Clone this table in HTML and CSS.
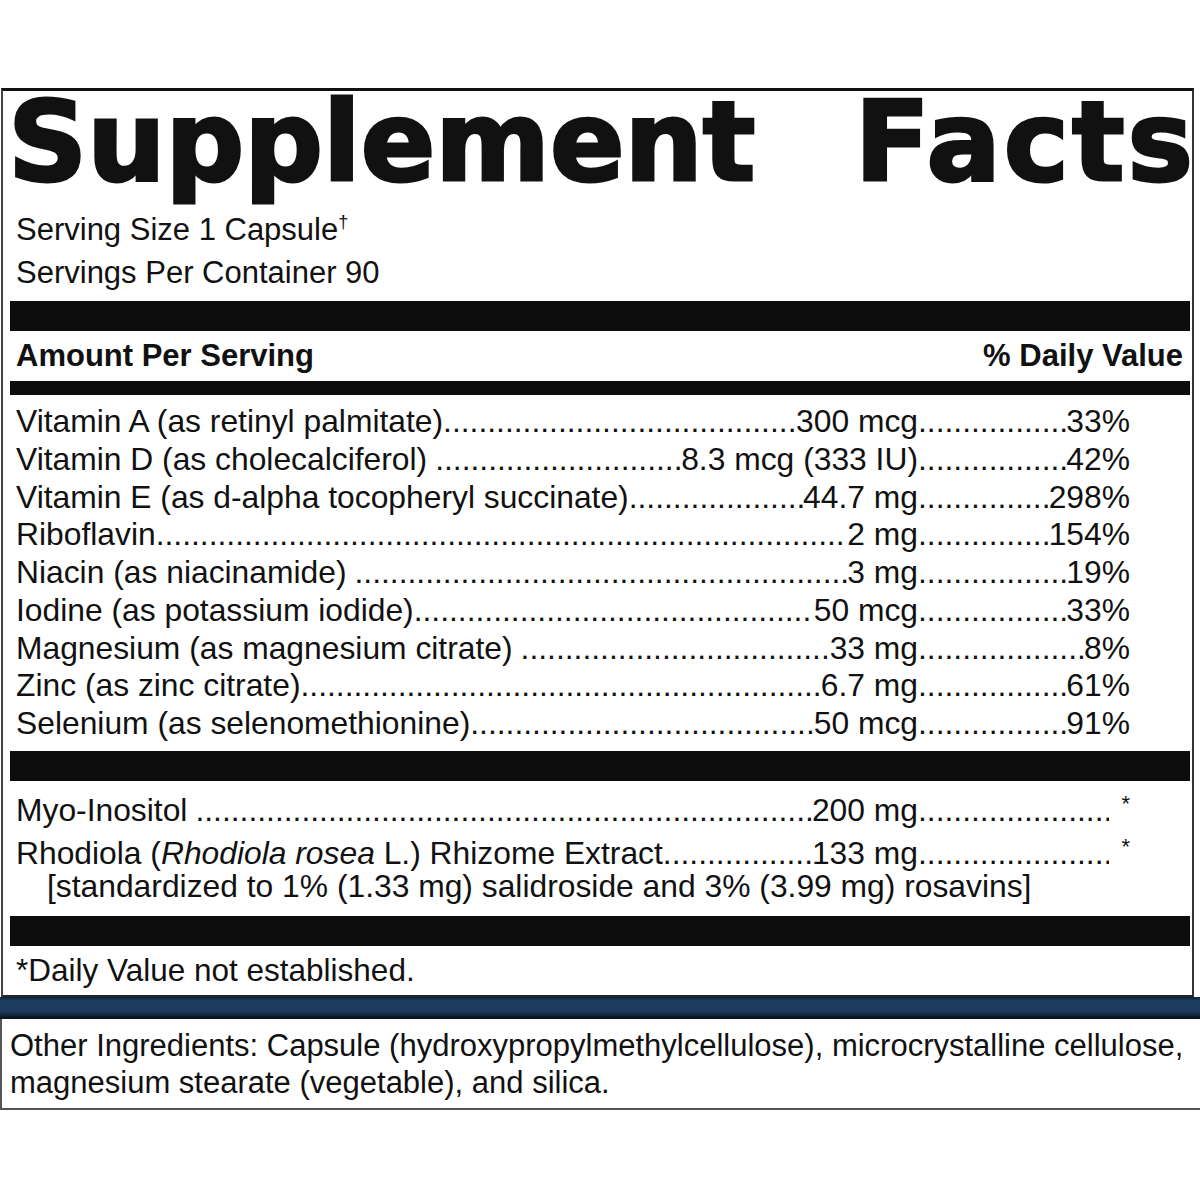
FILE: index.html
```html
<!DOCTYPE html>
<html lang="en">
<head>
  <meta charset="UTF-8">
  <meta name="viewport" content="width=device-width, initial-scale=1.0">
  <title>Supplement Facts</title>
  <link rel="stylesheet" href="styles.css">
</head>
<body>
<div class="page">
  <div class="label">
    <h1 class="title"><span>Supplement</span><span class="facts">Facts</span></h1>
    <div class="servings">
      <p>Serving Size 1 Capsule<sup>†</sup></p>
      <p>Servings Per Container 90</p>
    </div>
    <div class="bar thick"></div>
    <div class="head">
      <span>Amount Per Serving</span>
      <span>% Daily Value</span>
    </div>
    <div class="bar thin"></div>
    <ul class="rows">
      <li class="row">
        <div class="lead"><span class="name">Vitamin A (as retinyl palmitate)</span><span class="dots"></span><span class="amt">300 mcg</span></div>
        <div class="tail"><span class="dots"></span><span class="dv">33%</span></div>
      </li>
      <li class="row">
        <div class="lead"><span class="name sp">Vitamin D (as cholecalciferol)</span><span class="dots"></span><span class="amt">8.3 mcg (333 IU)</span></div>
        <div class="tail"><span class="dots"></span><span class="dv">42%</span></div>
      </li>
      <li class="row">
        <div class="lead"><span class="name">Vitamin E (as d-alpha tocopheryl succinate)</span><span class="dots"></span><span class="amt">44.7 mg</span></div>
        <div class="tail"><span class="dots"></span><span class="dv">298%</span></div>
      </li>
      <li class="row">
        <div class="lead"><span class="name">Riboflavin</span><span class="dots"></span><span class="amt">2 mg</span></div>
        <div class="tail"><span class="dots"></span><span class="dv">154%</span></div>
      </li>
      <li class="row">
        <div class="lead"><span class="name sp">Niacin (as niacinamide)</span><span class="dots"></span><span class="amt">3 mg</span></div>
        <div class="tail"><span class="dots"></span><span class="dv">19%</span></div>
      </li>
      <li class="row">
        <div class="lead"><span class="name">Iodine (as potassium iodide)</span><span class="dots"></span><span class="amt">50 mcg</span></div>
        <div class="tail"><span class="dots"></span><span class="dv">33%</span></div>
      </li>
      <li class="row">
        <div class="lead"><span class="name sp">Magnesium (as magnesium citrate)</span><span class="dots"></span><span class="amt">33 mg</span></div>
        <div class="tail"><span class="dots"></span><span class="dv">8%</span></div>
      </li>
      <li class="row">
        <div class="lead"><span class="name">Zinc (as zinc citrate)</span><span class="dots"></span><span class="amt">6.7 mg</span></div>
        <div class="tail"><span class="dots"></span><span class="dv">61%</span></div>
      </li>
      <li class="row">
        <div class="lead"><span class="name">Selenium (as selenomethionine)</span><span class="dots"></span><span class="amt">50 mcg</span></div>
        <div class="tail"><span class="dots"></span><span class="dv">91%</span></div>
      </li>
    </ul>
    <div class="bar thick after-rows"></div>
    <ul class="rows other">
      <li class="row myo">
        <div class="lead"><span class="name sp">Myo-Inositol</span><span class="dots"></span><span class="amt">200 mg</span></div>
        <div class="tail"><span class="dots"></span><span class="star">*</span></div>
      </li>
      <li class="row rhodiola">
        <div class="lead"><span class="name">Rhodiola (<i>Rhodiola rosea</i> L.) Rhizome Extract</span><span class="dots"></span><span class="amt">133 mg</span></div>
        <div class="tail"><span class="dots"></span><span class="star">*</span></div>
      </li>
      <li class="note">[standardized to 1% (1.33 mg) salidroside and 3% (3.99 mg) rosavins]</li>
    </ul>
    <div class="bar thick after-other"></div>
    <p class="footnote">*Daily Value not established.</p>
  </div>
  <div class="navy"></div>
  <p class="ingredients">Other Ingredients: Capsule (hydroxypropylmethylcellulose), microcrystalline cellulose, magnesium stearate (vegetable), and silica.</p>
</div>
</body>
</html>
```

FILE: styles.css
```css
body {
  margin: 0;
  background: #fff;
  color: #111;
  font-family: 'Liberation Sans', Arial, sans-serif;
}

.page {
  padding-top: 88px;
}

.label {
  margin-left: 1px;
  width: 1193px;
  box-sizing: border-box;
  border-top: 3px solid #111;
  border-left: 2px solid #444;
  border-right: 2px solid #333;
  border-bottom: 2px solid #222;
  padding: 0 2px 8px 7px;
}

.title {
  display: flex;
  justify-content: space-between;
  margin: 1px -3px 0 -2px;
  font-family: 'DejaVu Sans', sans-serif;
  font-weight: bold;
  font-size: 110px;
  line-height: 100px;
  -webkit-text-stroke: 3px #111;
}

.title .facts {
  letter-spacing: 3px;
  margin-right: -3px;
}

.servings {
  padding-top: 16px;
}

.servings p {
  margin: 0;
  padding-left: 6px;
  font-size: 31px;
  line-height: 43px;
}

.servings sup {
  font-size: 18px;
  vertical-align: 12px;
  line-height: 0;
}

.bar {
  background: #0d0d0d;
}

.bar.thick {
  height: 30px;
  margin-top: 7px;
}

.bar.thin {
  height: 14px;
  margin-top: 8px;
}

.bar.after-rows {
  margin-top: 8px;
}

.bar.after-other {
  margin-top: 12.75px;
}

.head {
  display: flex;
  justify-content: space-between;
  margin-top: 8px;
  padding: 0 7px 0 6px;
  font-size: 31px;
  font-weight: bold;
  line-height: 34px;
}

.rows {
  list-style: none;
  margin: 8px 0 0;
  padding: 0;
  font-size: 31.8px;
  line-height: 37.75px;
}

.row {
  display: flex;
  padding-left: 6px;
}

.lead {
  display: flex;
  flex: none;
  width: 902px;
}

.tail {
  display: flex;
  flex: none;
  width: 212px;
}

.name, .amt, .dv, .star {
  flex: none;
  white-space: nowrap;
}

.name.sp {
  padding-right: 8px;
}

.dots {
  flex: 1;
  min-width: 0;
  overflow: hidden;
  white-space: nowrap;
}

.dots::before {
  content: "............................................................................................................................................";
}

.star {
  margin-left: 12px;
  font-size: 22px;
  vertical-align: top;
  line-height: 22px;
}

.rows.other {
  margin-top: 12.5px;
  line-height: 34px;
}

.rows.other .rhodiola {
  margin-top: 9px;
}

.note {
  padding-left: 37px;
  line-height: 33px;
}

.footnote {
  margin: 7px 0 0;
  padding-left: 6px;
  font-size: 31.5px;
  line-height: 34px;
}

.navy {
  height: 20px;
  background: linear-gradient(#0e2238, #1d3e62 20%, #1b3a5c 75%, #0b1726);
  border-bottom: 2px solid #0a1420;
}

.ingredients {
  margin: 0;
  padding: 7.5px 8px 6.3px 8px;
  border-left: 2px solid #555;
  border-bottom: 2px solid #555;
  font-size: 31px;
  line-height: 37.6px;
}
```
